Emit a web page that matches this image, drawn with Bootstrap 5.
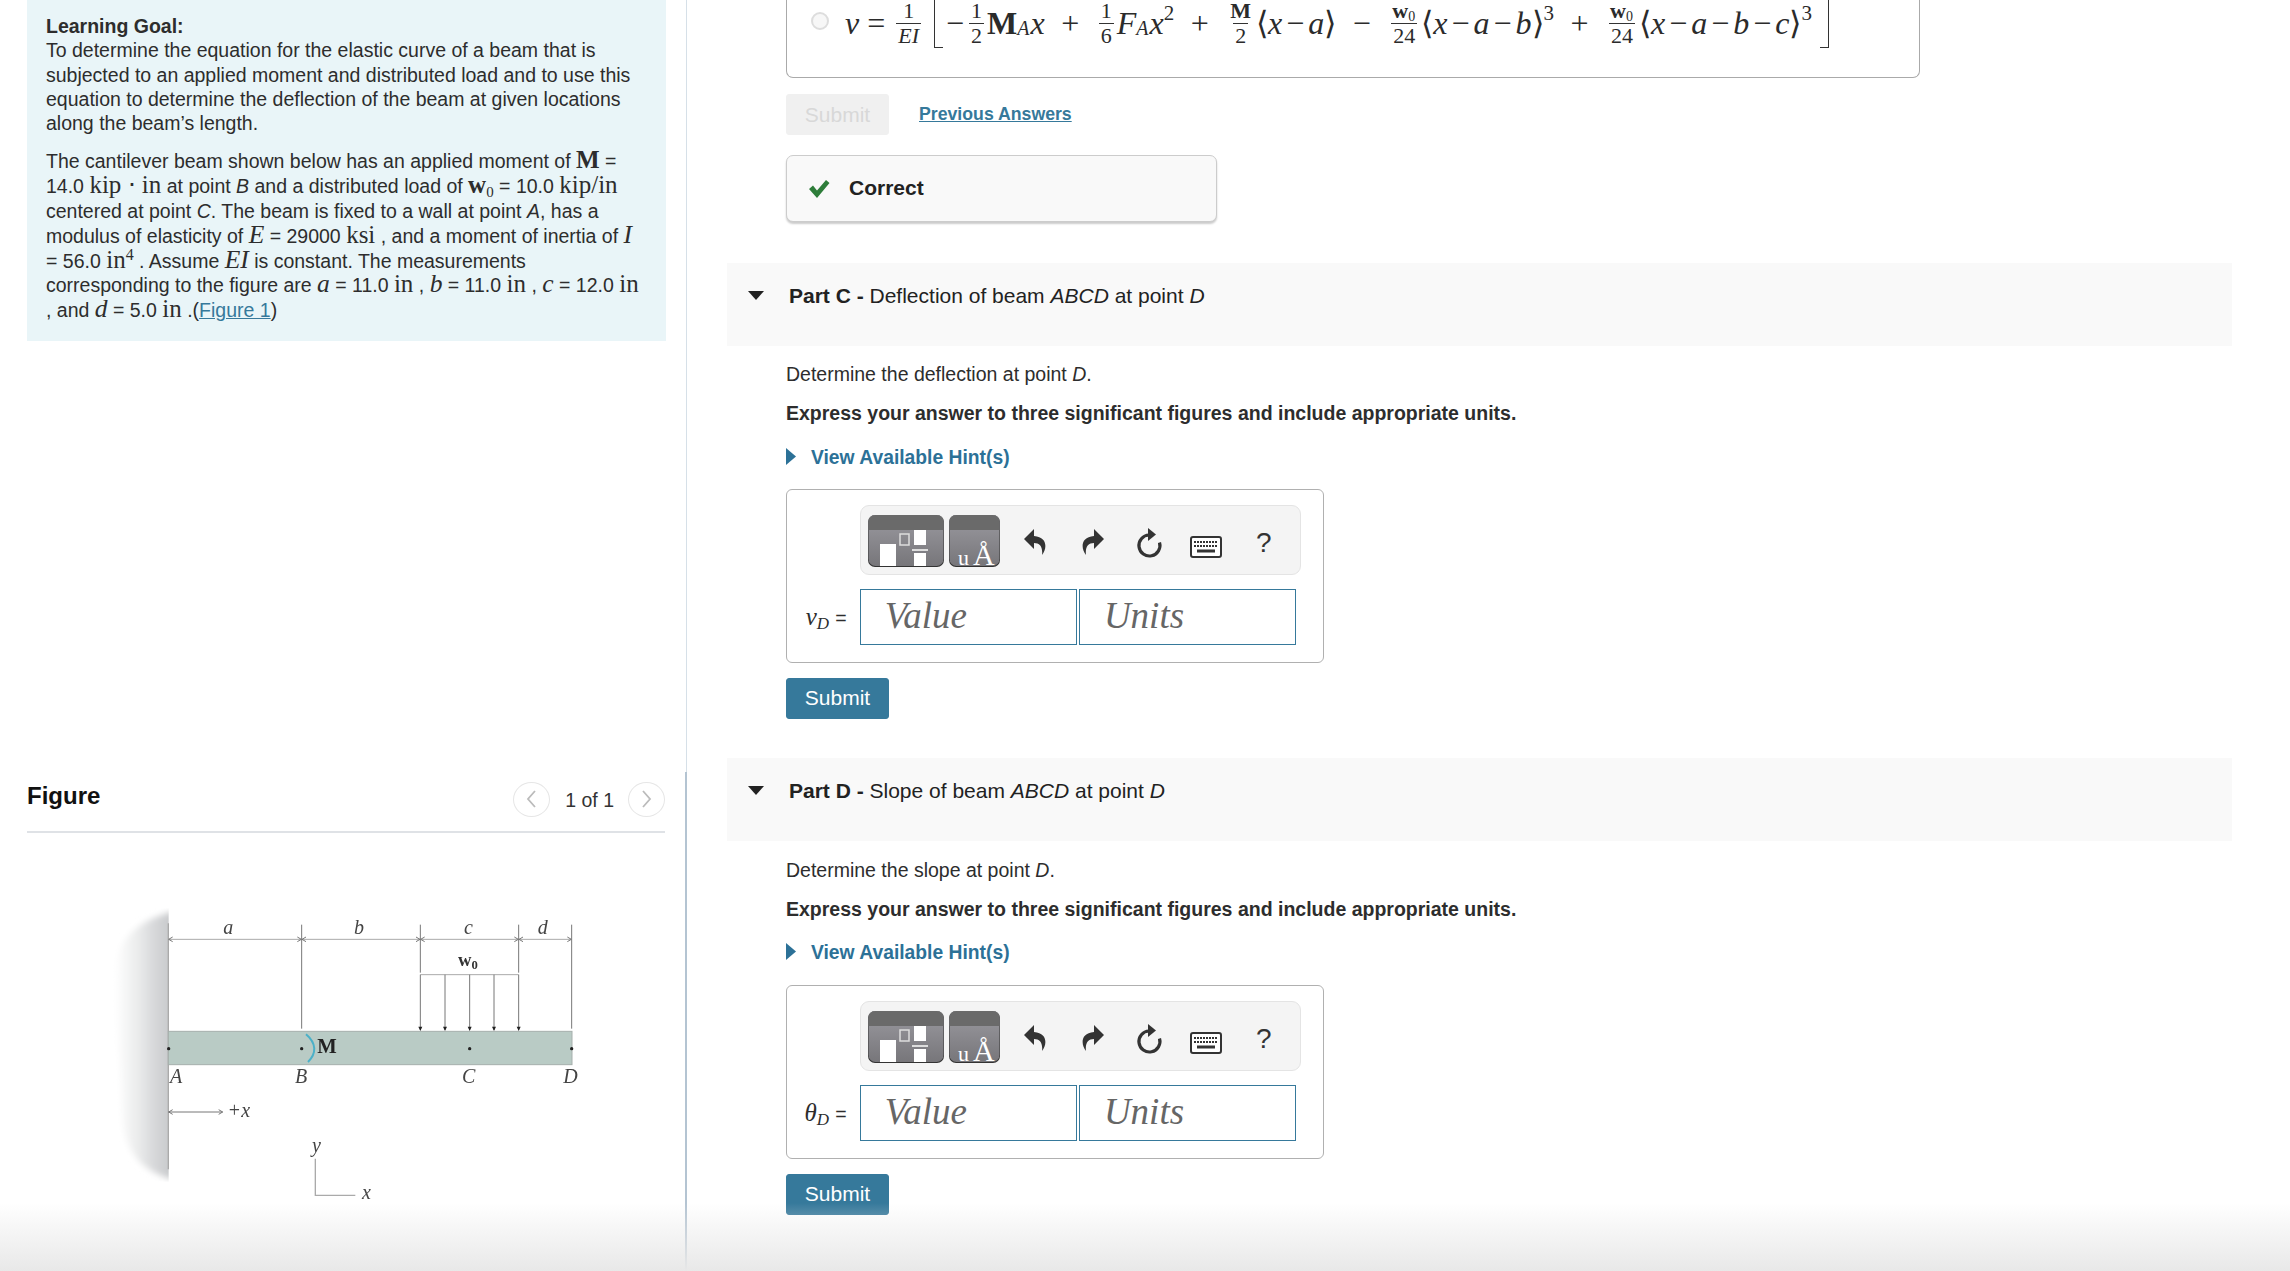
<!DOCTYPE html>
<html lang="en">
<head>
<meta charset="utf-8">
<title>Beam deflection</title>
<link href="https://cdn.jsdelivr.net/npm/bootstrap@5.3.0/dist/css/bootstrap.min.css" rel="stylesheet">
<style>
html,body{height:100%}
body{width:2290px;height:1271px;overflow:hidden;font-family:"Liberation Sans",Arial,sans-serif;font-size:19.5px;line-height:24.3px;color:#2d2d2d;background:#fff;position:relative}
.lc{width:687px;flex:none;display:flex;flex-direction:column;height:1271px}
.lt{height:772px;padding:0 20px 0 27px;border-right:1px solid #d6e0e8}
.lb{flex:1;padding:0 20px 0 27px;border-right:2px solid #b4c4d2}
.goal{background:#e9f5f8;height:341px;padding:14px 0 0 19px;white-space:nowrap}
.goal p{margin:0}
.goal p+p{margin-top:14px;line-height:24.8px}
.m{font-family:"Liberation Serif",serif;font-size:25px;line-height:0;letter-spacing:0}
.mi{font-family:"Liberation Serif",serif;font-style:italic;font-size:25.5px;line-height:0;letter-spacing:0}
.goal sub,.goal sup{line-height:0}
.goal a,.lnk{color:#36799b}
.figbar{height:61px;border-bottom:2px solid #dfe2e6}
.figttl{font-size:24px;font-weight:700;color:#111;line-height:30px;margin:-11px 0 0}
.pg{width:37px;height:35px;border:1px solid #e6e6e6;border-radius:50%;background:#fff}
.pgtxt{font-size:19.5px;padding:3px 14px 0 15px;color:#333}
.pgw{margin-top:-5px}
.figsvg{display:block;width:520px;height:340px;margin:57px 0 0 73px;filter:blur(.5px)}
.rc{flex:1;padding-left:40px;padding-right:58px}
.optbox{margin-left:59px;width:1134px;height:78px;border:1px solid #aaa;border-top:0;border-radius:0 0 7px 7px;padding-left:24px}
.rad{width:18px;height:18px;border:2px solid #ddd;border-radius:50%;background:#f7f7f7;flex:none;margin-top:12px}
.eq{font-family:"Liberation Serif",serif;font-style:italic;font-size:32px;line-height:40px;color:#2b2b2b;margin-left:16px;height:46px;white-space:nowrap}
.eq b{font-style:normal}
.eq sub{font-size:20px;bottom:-.25em;line-height:0;margin-right:1px}
.eq sup{font-size:21px;top:-.5em;line-height:0;font-style:normal}
.fr{display:inline-flex;flex-direction:column;align-items:center;font-size:22px;line-height:24px;margin:0 3px}
.fr>span+span{border-top:1.500px solid #333}
.fr>span{padding:0 2px;font-style:normal}
.fr em{font-style:italic}
.fr b{font-size:22px}
.fr sub{font-size:14px}
.lbr,.rbr{width:9px;height:48px;border:1.500px solid #333;border-top:0;align-self:flex-start;flex:none}
.lbr{border-right:0;margin:0 3px 0 10px}
.rbr{border-left:0;margin-left:8px}
.op{font-style:normal;margin:0 16.5px}
.op2{font-style:normal;margin:0 4px}
.ang{font-style:normal;font-size:32px;font-weight:400}
.btnm{--bs-btn-bg:#36799b;--bs-btn-border-color:#36799b;--bs-btn-color:#fff;--bs-btn-hover-bg:#2d6987;--bs-btn-hover-color:#fff;--bs-btn-hover-border-color:#2d6987;--bs-btn-disabled-bg:#f0f0f0;--bs-btn-disabled-border-color:#f0f0f0;--bs-btn-disabled-color:#d8d8d8;--bs-btn-disabled-opacity:1;width:103px;height:41px;padding:0;font-size:21px;line-height:38px;border-radius:3px}
.body-in{margin-left:59px}
.prow{margin-left:59px;margin-top:16px;height:41px}
.lnk{font-weight:700;font-size:17.700px;margin-left:30px}
.okbox{margin:20px 0 0 59px;width:431px;height:67px;border:1px solid #ccc;border-radius:7px;background:#f9f9f9;box-shadow:0 2px 2px #ccc;padding-left:21px;font-weight:700;font-size:21px;color:#222}
.okbox svg{margin-right:19px}
.parthd{height:83px;background:#f9f9f9;margin-top:41px;padding:21px 0 0 20px;font-size:21px;color:#222}
.parthd svg{margin:3px 24px 0 0}
.t1{margin-top:16px}
.t2{margin-top:15px;font-weight:700}
.t3{margin-top:20px;font-weight:700;font-size:19.300px;color:#2c7197}
.t3 svg{margin-right:15px;vertical-align:-1px}
.ansbox{margin-top:19px;width:538px;height:174px;border:1px solid #b0b0b0;border-radius:6px;padding:15px 25px 0 73px}
.tb{width:441px;height:70px;background:#f4f4f4;border:1px solid #e4e4e4;border-radius:9px;padding:9px 8px 0 7px;margin-right:-14px}
.tbi{margin-right:5px;flex:none;overflow:visible}
.tbg{width:38px;text-align:center;flex:none}
.qm{font-size:28px;line-height:30px;color:#333}
.frow{margin:14px 0 0 -73px;height:56px}
.vlab{width:73px;text-align:right;padding-right:13px;font-family:"Liberation Serif",serif;font-style:italic;font-size:25px;white-space:nowrap;padding-top:2px}
.vlab sub{font-size:17px}
.vlab span{font-family:"Liberation Sans",sans-serif;font-style:normal;font-size:19.500px}
.ubx{width:218px;height:56px;border:1px solid #36799b;font-family:"Liberation Serif",serif;font-style:italic;font-size:37px;line-height:52px;color:#666;padding-left:24px;margin-right:2px}
.sb2{margin-top:15px}
.fadeb{position:absolute;left:0;right:0;bottom:0;height:68px;background:linear-gradient(to bottom,rgba(232,232,232,0),rgba(232,232,232,1));pointer-events:none}
</style>
</head>
<body class="d-flex">
<div class="lc">
  <div class="lt">
    <div class="goal">
      <p><strong>Learning Goal:</strong><br>To determine the equation for the elastic curve of a beam that is<br>subjected to an applied moment and distributed load and to use this<br>equation to determine the deflection of the beam at given locations<br>along the beam’s length.</p>
      <p>The cantilever beam shown below has an applied moment of <b class="m">M</b> =<br>14.0 <span class="m">kip ⋅ in</span> at point <em>B</em> and a distributed load of <b class="m">w</b><sub class="m" style="font-size:15px">0</sub> = 10.0 <span class="m">kip/in</span><br>centered at point <em>C</em>. The beam is fixed to a wall at point <em>A</em>, has a<br>modulus of elasticity of <span class="mi">E</span> = 29000 <span class="m">ksi</span> , and a moment of inertia of <span class="mi">I</span><br>= 56.0 <span class="m">in<sup style="font-size:16px">4</sup></span> . Assume <span class="mi">EI</span> is constant. The measurements<br>corresponding to the figure are <span class="mi">a</span> = 11.0 <span class="m">in</span> , <span class="mi">b</span> = 11.0 <span class="m">in</span> , <span class="mi">c</span> = 12.0 <span class="m">in</span><br>, and <span class="mi">d</span> = 5.0 <span class="m">in</span> .(<a href="#">Figure 1</a>)</p>
    </div>
  </div>
  <div class="lb">
    <div class="figbar d-flex justify-content-between align-items-center">
      <h2 class="figttl">Figure</h2>
      <div class="d-flex align-items-center pgw">
        <div class="pg d-flex align-items-center justify-content-center"><svg width="11" height="18" viewBox="0 0 11 18"><path d="M9 1L2 9l7 8" fill="none" stroke="#bbb" stroke-width="1.800"/></svg></div>
        <div class="pgtxt">1 of 1</div>
        <div class="pg d-flex align-items-center justify-content-center"><svg width="11" height="18" viewBox="0 0 11 18"><path d="M2 1l7 8-7 8" fill="none" stroke="#bbb" stroke-width="1.800"/></svg></div>
      </div>
    </div>
    <svg class="figsvg" viewBox="0 0 1560 1020" aria-label="Beam figure">
      <defs>
        <linearGradient id="wg" x1="0" x2="1" y1="0" y2="0"><stop offset="0" stop-color="#fff"/><stop offset=".35" stop-color="#eceded"/><stop offset=".65" stop-color="#d6d7d9"/><stop offset="1" stop-color="#c2c4c6"/></linearGradient>
        <filter id="sf" x="-20%" y="-10%" width="140%" height="120%"><feGaussianBlur stdDeviation="9"/></filter>
        <clipPath id="wc"><rect x="0" y="55" width="206" height="820"/></clipPath>
      </defs>
      <g clip-path="url(#wc)"><path d="M230 62C100 90 45 160 45 260C47 400 65 560 67 680C75 790 130 850 230 870Z" fill="url(#wg)" filter="url(#sf)"/></g>
      <path d="M205 100V838" stroke="#aaa" stroke-width="4"/>
      <rect x="205" y="424" width="1211" height="100" fill="#b9cbc5" stroke="#a6afac" stroke-width="3"/>
      <g stroke="#777" stroke-width="3" fill="none">
        <path d="M205 148H1414" stroke="#aaa"/>
        <path d="M605 104V416M961 104V248M1256 104V248M1415 104V416"/>
        <path d="M961 254H1256" stroke="#aaa"/>
        <path d="M961 254V420M1035 254V420M1109 254V420M1182 254V420M1256 254V420"/>
        <path d="M205 666H368"/>
        <path d="M646 806V916H766" stroke="#aaa" stroke-width="4"/>
        <path d="M218 141l-12 7 12 7M592 141l12 7-12 7M618 141l-12 7 12 7M948 141l12 7-12 7M974 141l-12 7 12 7M1243 141l12 7-12 7M1269 141l-12 7 12 7M1402 141l12 7-12 7M218 659l-12 7 12 7M356 659l12 7-12 7"/>
      </g>
      <g fill="#222">
        <path d="M955 410h12l-6 13zM1029 410h12l-6 13zM1103 410h12l-6 13zM1176 410h12l-6 13zM1250 410h12l-6 13z"/>
        <circle cx="206" cy="476" r="5"/><circle cx="605" cy="476" r="5"/><circle cx="1109" cy="476" r="5"/><circle cx="1415" cy="476" r="5"/>
      </g>
      <path d="M618 433C650 460 650 490 624 516" fill="none" stroke="#4bb0c8" stroke-width="6"/>
      <g font-family="Liberation Serif, serif" font-style="italic" font-size="60" fill="#444">
        <text x="370" y="132">a</text><text x="762" y="132">b</text><text x="1092" y="132">c</text><text x="1313" y="132">d</text>
        <text x="210" y="578">A</text><text x="585" y="578">B</text><text x="1086" y="578">C</text><text x="1390" y="578">D</text>
        <text x="424" y="680">x</text><text x="636" y="786">y</text><text x="786" y="928">x</text>
      </g>
      <text x="386" y="680" font-family="Liberation Serif, serif" font-size="60" fill="#444">+</text>
      <text x="652" y="488" font-family="Liberation Serif, serif" font-weight="700" font-size="62" fill="#222">M</text>
      <text x="1074" y="228" font-family="Liberation Serif, serif" font-weight="700" font-size="56" fill="#333">w<tspan font-size="38" dy="10">0</tspan></text>
    </svg>
  </div>
</div>

<div class="rc">
  <div class="optbox d-flex align-items-start">
    <span class="rad"></span>
    <div class="eq d-flex align-items-center">
      v<span class="op2" style="margin:0 8px">=</span><span class="fr"><span>1</span><span><em>EI</em></span></span><span class="lbr"></span>
      <span class="op2" style="margin:0 2px 0 0">−</span><span class="fr"><span>1</span><span>2</span></span><b>M</b><sub>A</sub>x<span class="op">+</span><span class="fr"><span>1</span><span>6</span></span>F<sub>A</sub>x<sup>2</sup><span class="op">+</span><span class="fr"><span><b>M</b></span><span>2</span></span><span class="ang">⟨</span>x<span class="op2">−</span>a<span class="ang">⟩</span><span class="op">−</span><span class="fr"><span><b>w</b><sub>0</sub></span><span>24</span></span><span class="ang">⟨</span>x<span class="op2">−</span>a<span class="op2">−</span>b<span class="ang">⟩</span><sup>3</sup><span class="op">+</span><span class="fr"><span><b>w</b><sub>0</sub></span><span>24</span></span><span class="ang">⟨</span>x<span class="op2">−</span>a<span class="op2">−</span>b<span class="op2">−</span>c<span class="ang">⟩</span><sup>3</sup><span class="rbr"></span>
    </div>
  </div>
  <div class="prow d-flex align-items-center">
    <button class="btn btnm" disabled>Submit</button>
    <a href="#" class="lnk">Previous Answers</a>
  </div>
  <div class="okbox d-flex align-items-center">
    <svg width="22" height="20" viewBox="0 0 22 20"><path d="M1 10l4-3.500 4 5L18 1l3.500 3L9 19z" fill="#2e7d3a"/></svg>Correct
  </div>

  <div class="parthd d-flex align-items-start">
    <svg width="18" height="18" viewBox="0 0 18 18"><path d="M1 4h16L9 13z" fill="#222"/></svg>
    <div><strong>Part C -</strong> Deflection of beam <em>ABCD</em> at point <em>D</em></div>
  </div>
  <div class="body-in">
    <div class="t1">Determine the deflection at point <em>D</em>.</div>
    <div class="t2">Express your answer to three significant figures and include appropriate units.</div>
    <div class="t3"><svg width="10" height="17" viewBox="0 0 10 17"><path d="M0 0l10 8.500L0 17z" fill="#2c7197"/></svg>View Available Hint(s)</div>
    <div class="ansbox">
      <div class="tb d-flex align-items-start">
        <svg class="tbi" width="76" height="52" viewBox="0 0 76 52"><defs><linearGradient id="g1" x1="0" x2="0" y1="0" y2="1"><stop offset="0" stop-color="#9b9aa0"/><stop offset="1" stop-color="#77767a"/></linearGradient></defs><rect width="76" height="52" rx="7" fill="#333"/><rect x=".5" width="75" height="51" rx="7" fill="url(#g1)"/><path d="M.5 15V7a7 7 0 0 1 7-7h61a7 7 0 0 1 7 7v8z" fill="#6a6a6a"/><rect x="12" y="29" width="16" height="22" fill="#fff"/><rect x="32" y="19" width="9" height="11" fill="none" stroke="#ddd" stroke-width="1.500"/><rect x="46" y="15" width="12" height="15" fill="#fff"/><rect x="44" y="34" width="16" height="2" fill="#ddd"/><rect x="46" y="38" width="12" height="13" fill="#fff"/></svg>
        <svg class="tbi" width="51" height="52" viewBox="0 0 51 52"><rect width="51" height="52" rx="7" fill="#333"/><rect x=".5" width="50" height="51" rx="7" fill="url(#g1)"/><path d="M.5 15V7a7 7 0 0 1 7-7h36a7 7 0 0 1 7 7v8z" fill="#6a6a6a"/><text x="9" y="50" font-family="Liberation Serif,serif" font-size="22" fill="#fff">u</text><text x="24" y="50" font-family="Liberation Serif,serif" font-size="30" fill="#fff">Å</text></svg>
        <div class="tbg" style="margin-left:11px;margin-top:13px"><svg width="24" height="28" viewBox="0 0 24 28"><path d="M11 1L1 11l10 10v-6c6 0 9 4 8 12 5-6 6-18-8-19z" fill="#333"/></svg></div>
        <div class="tbg" style="margin-left:20px;margin-top:13px"><svg width="24" height="28" viewBox="0 0 24 28"><path d="M13 1l10 10-10 10v-6c-6 0-9 4-8 12-5-6-6-18 8-19z" fill="#333"/></svg></div>
        <div class="tbg" style="margin-left:18px;margin-top:12px"><svg width="28" height="32" viewBox="0 0 28 32"><path d="M14 8A10.500 10.500 0 1 0 24.500 15.500" fill="none" stroke="#333" stroke-width="3.200"/><path d="M13 1l8 6.500-8 6.500z" fill="#333"/></svg></div>
        <div class="tbg" style="margin-left:19px;margin-top:18px"><svg width="32" height="22" viewBox="0 0 32 22"><rect x="1" y="1" width="30" height="20" rx="2" fill="#fff" stroke="#333" stroke-width="2"/><path d="M4 6h24M4 10h24" stroke="#333" stroke-width="2" stroke-dasharray="2 1"/><path d="M7 15h18" stroke="#333" stroke-width="3"/></svg></div>
        <div class="qm" style="margin-left:31px;margin-top:13px">?</div>
      </div>
      <div class="frow d-flex">
        <div class="vlab align-self-center">v<sub>D</sub> <span>=</span></div>
        <div class="ubx">Value</div>
        <div class="ubx">Units</div>
      </div>
    </div>
    <button class="btn btnm sb2">Submit</button>
  </div>

  <div class="parthd d-flex align-items-start" style="margin-top:39px">
    <svg width="18" height="18" viewBox="0 0 18 18"><path d="M1 4h16L9 13z" fill="#222"/></svg>
    <div><strong>Part D -</strong> Slope of beam <em>ABCD</em> at point <em>D</em></div>
  </div>
  <div class="body-in">
    <div class="t1" style="margin-top:17px">Determine the slope at point <em>D</em>.</div>
    <div class="t2">Express your answer to three significant figures and include appropriate units.</div>
    <div class="t3"><svg width="10" height="17" viewBox="0 0 10 17"><path d="M0 0l10 8.500L0 17z" fill="#2c7197"/></svg>View Available Hint(s)</div>
    <div class="ansbox">
      <div class="tb d-flex align-items-start">
        <svg class="tbi" width="76" height="52" viewBox="0 0 76 52"><rect width="76" height="52" rx="7" fill="#333"/><rect x=".5" width="75" height="51" rx="7" fill="url(#g1)"/><path d="M.5 15V7a7 7 0 0 1 7-7h61a7 7 0 0 1 7 7v8z" fill="#6a6a6a"/><rect x="12" y="29" width="16" height="22" fill="#fff"/><rect x="32" y="19" width="9" height="11" fill="none" stroke="#ddd" stroke-width="1.500"/><rect x="46" y="15" width="12" height="15" fill="#fff"/><rect x="44" y="34" width="16" height="2" fill="#ddd"/><rect x="46" y="38" width="12" height="13" fill="#fff"/></svg>
        <svg class="tbi" width="51" height="52" viewBox="0 0 51 52"><rect width="51" height="52" rx="7" fill="#333"/><rect x=".5" width="50" height="51" rx="7" fill="url(#g1)"/><path d="M.5 15V7a7 7 0 0 1 7-7h36a7 7 0 0 1 7 7v8z" fill="#6a6a6a"/><text x="9" y="50" font-family="Liberation Serif,serif" font-size="22" fill="#fff">u</text><text x="24" y="50" font-family="Liberation Serif,serif" font-size="30" fill="#fff">Å</text></svg>
        <div class="tbg" style="margin-left:11px;margin-top:13px"><svg width="24" height="28" viewBox="0 0 24 28"><path d="M11 1L1 11l10 10v-6c6 0 9 4 8 12 5-6 6-18-8-19z" fill="#333"/></svg></div>
        <div class="tbg" style="margin-left:20px;margin-top:13px"><svg width="24" height="28" viewBox="0 0 24 28"><path d="M13 1l10 10-10 10v-6c-6 0-9 4-8 12-5-6-6-18 8-19z" fill="#333"/></svg></div>
        <div class="tbg" style="margin-left:18px;margin-top:12px"><svg width="28" height="32" viewBox="0 0 28 32"><path d="M14 8A10.500 10.500 0 1 0 24.500 15.500" fill="none" stroke="#333" stroke-width="3.200"/><path d="M13 1l8 6.500-8 6.500z" fill="#333"/></svg></div>
        <div class="tbg" style="margin-left:19px;margin-top:18px"><svg width="32" height="22" viewBox="0 0 32 22"><rect x="1" y="1" width="30" height="20" rx="2" fill="#fff" stroke="#333" stroke-width="2"/><path d="M4 6h24M4 10h24" stroke="#333" stroke-width="2" stroke-dasharray="2 1"/><path d="M7 15h18" stroke="#333" stroke-width="3"/></svg></div>
        <div class="qm" style="margin-left:31px;margin-top:13px">?</div>
      </div>
      <div class="frow d-flex">
        <div class="vlab align-self-center">θ<sub>D</sub> <span>=</span></div>
        <div class="ubx">Value</div>
        <div class="ubx">Units</div>
      </div>
    </div>
    <button class="btn btnm sb2">Submit</button>
  </div>
</div>
<div class="fadeb"></div>
<script src="https://cdn.jsdelivr.net/npm/bootstrap@5.3.0/dist/js/bootstrap.bundle.min.js"></script>
</body>
</html>
